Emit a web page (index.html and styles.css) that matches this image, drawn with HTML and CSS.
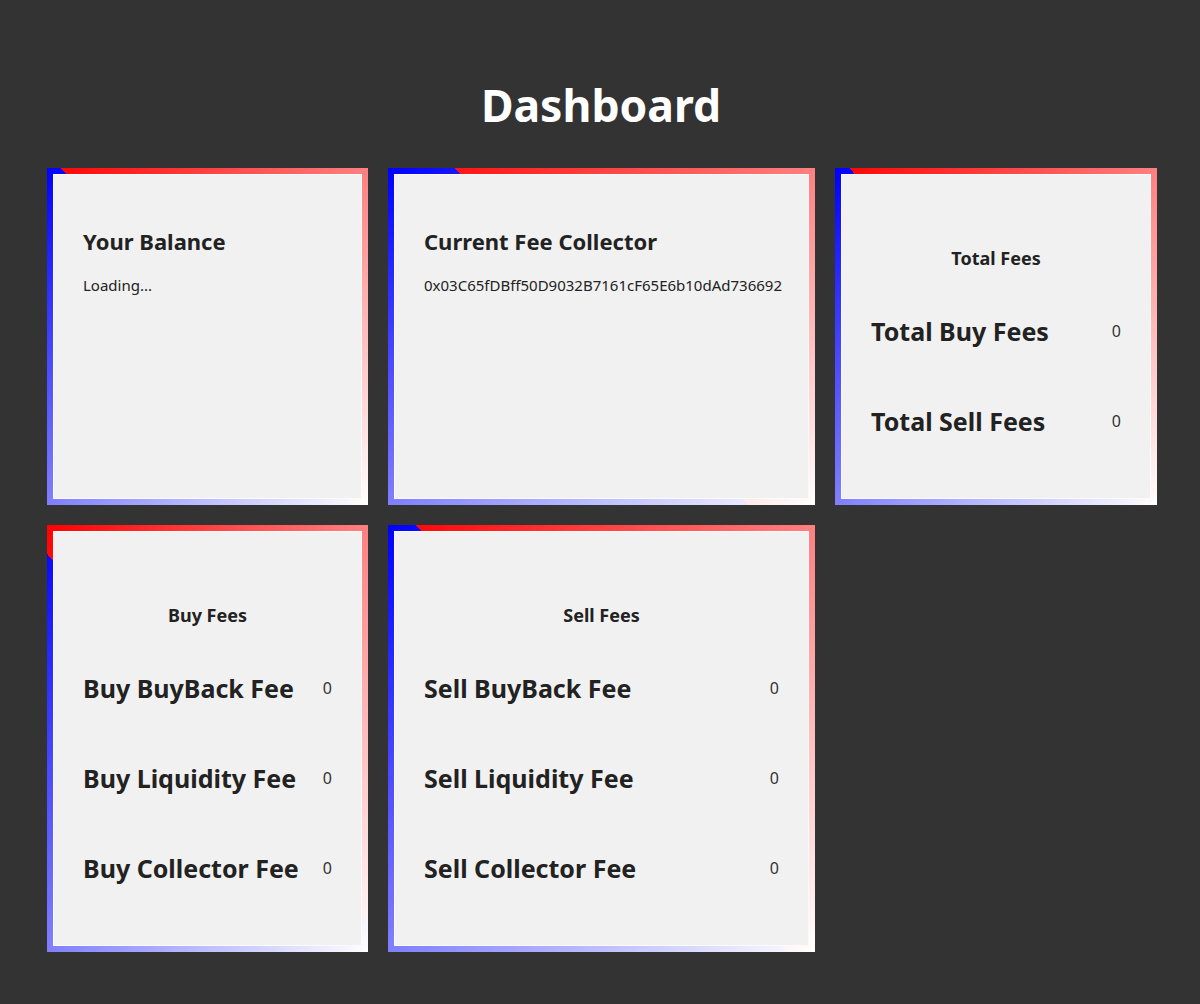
FILE: index.html
```html
<!DOCTYPE html>
<html lang="en">
  <head>
    <meta charset="UTF-8" />
    <meta name="viewport" content="width=device-width, initial-scale=1.0" />
    <title>Dashboard</title>
    <link rel="stylesheet" href="styles.css">
  </head>
  <body>
    <div class="container">
      <h1>Dashboard</h1>

      <div class="cards">
        <div class="card">
          <div class="card-body">
            <h2>Your Balance</h2>
            <p>Loading...</p>
          </div>
        </div>

        <div class="card">
          <div class="card-body">
            <h2>Current Fee Collector</h2>
            <p>0x03C65fDBff50D9032B7161cF65E6b10dAd736692</p>
          </div>
        </div>

        <div class="card">
          <div class="card-body">
            <h3>Total Fees</h3>
            <div class="fee-row">
              <span class="fee-label">Total Buy Fees</span>
              <span class="fee-value">0</span>
            </div>
            <div class="fee-row">
              <span class="fee-label">Total Sell Fees</span>
              <span class="fee-value">0</span>
            </div>
          </div>
        </div>

        <div class="card">
          <div class="card-body">
            <h3>Buy Fees</h3>
            <div class="fee-row">
              <span class="fee-label">Buy BuyBack Fee</span>
              <span class="fee-value">0</span>
            </div>
            <div class="fee-row">
              <span class="fee-label">Buy Liquidity Fee</span>
              <span class="fee-value">0</span>
            </div>
            <div class="fee-row">
              <span class="fee-label">Buy Collector Fee</span>
              <span class="fee-value">0</span>
            </div>
          </div>
        </div>

        <div class="card">
          <div class="card-body">
            <h3>Sell Fees</h3>
            <div class="fee-row">
              <span class="fee-label">Sell BuyBack Fee</span>
              <span class="fee-value">0</span>
            </div>
            <div class="fee-row">
              <span class="fee-label">Sell Liquidity Fee</span>
              <span class="fee-value">0</span>
            </div>
            <div class="fee-row">
              <span class="fee-label">Sell Collector Fee</span>
              <span class="fee-value">0</span>
            </div>
          </div>
        </div>
      </div>
    </div>
  </body>
</html>
```

FILE: styles.css
```css
body {
  font-family: "Noto Sans", "Open Sans", sans-serif;
  margin: 0;
  background-color: #333333;
  color: #222222;
}

.container {
  min-height: 1004px;
  padding-top: 77px;
  box-sizing: border-box;
}

h1 {
  color: white;
  text-align: center;
  font-size: 44.5px;
  line-height: 56px;
  margin: 0 0 35px;
  padding-left: 2px;
}

.cards {
  display: grid;
  grid-template-columns: 321px 427px 322px;
  justify-content: center;
  gap: 20px;
  padding-left: 4px;
}

/* two-tone gradient frame: red runs top/right, blue runs left/bottom */
.card {
  position: relative;
  padding: 6px;
  background: linear-gradient(to bottom right, #ff0000, #ffffff);
}

.card::before {
  content: "";
  position: absolute;
  inset: 0;
  background: linear-gradient(to bottom right, #0000ff, #ffffff);
  -webkit-mask-image: linear-gradient(49deg, #000 50%, transparent 50%);
  mask-image: linear-gradient(49deg, #000 50%, transparent 50%);
}

.card-body {
  position: relative;
  height: 100%;
  box-sizing: border-box;
  background-color: #f1f1f1;
  padding: 30px 30px 33px;
  box-shadow: inset 0 0 0 1px rgba(255, 255, 255, 0.7);
}

.card h2 {
  font-size: 22px;
  line-height: 30px;
  margin: 22px 0 14px;
}

.card p {
  font-size: 15px;
  line-height: 30px;
  margin: 0;
}

.card h3 {
  text-align: center;
  font-size: 18px;
  line-height: 24px;
  margin: 42px 0 16px;
}

.fee-row {
  display: flex;
  justify-content: space-between;
  align-items: center;
  padding: 27px 0;
}

.fee-label {
  font-size: 25px;
  line-height: 36px;
  font-weight: bold;
}

.fee-value {
  font-size: 16px;
  color: #333333;
}
```
